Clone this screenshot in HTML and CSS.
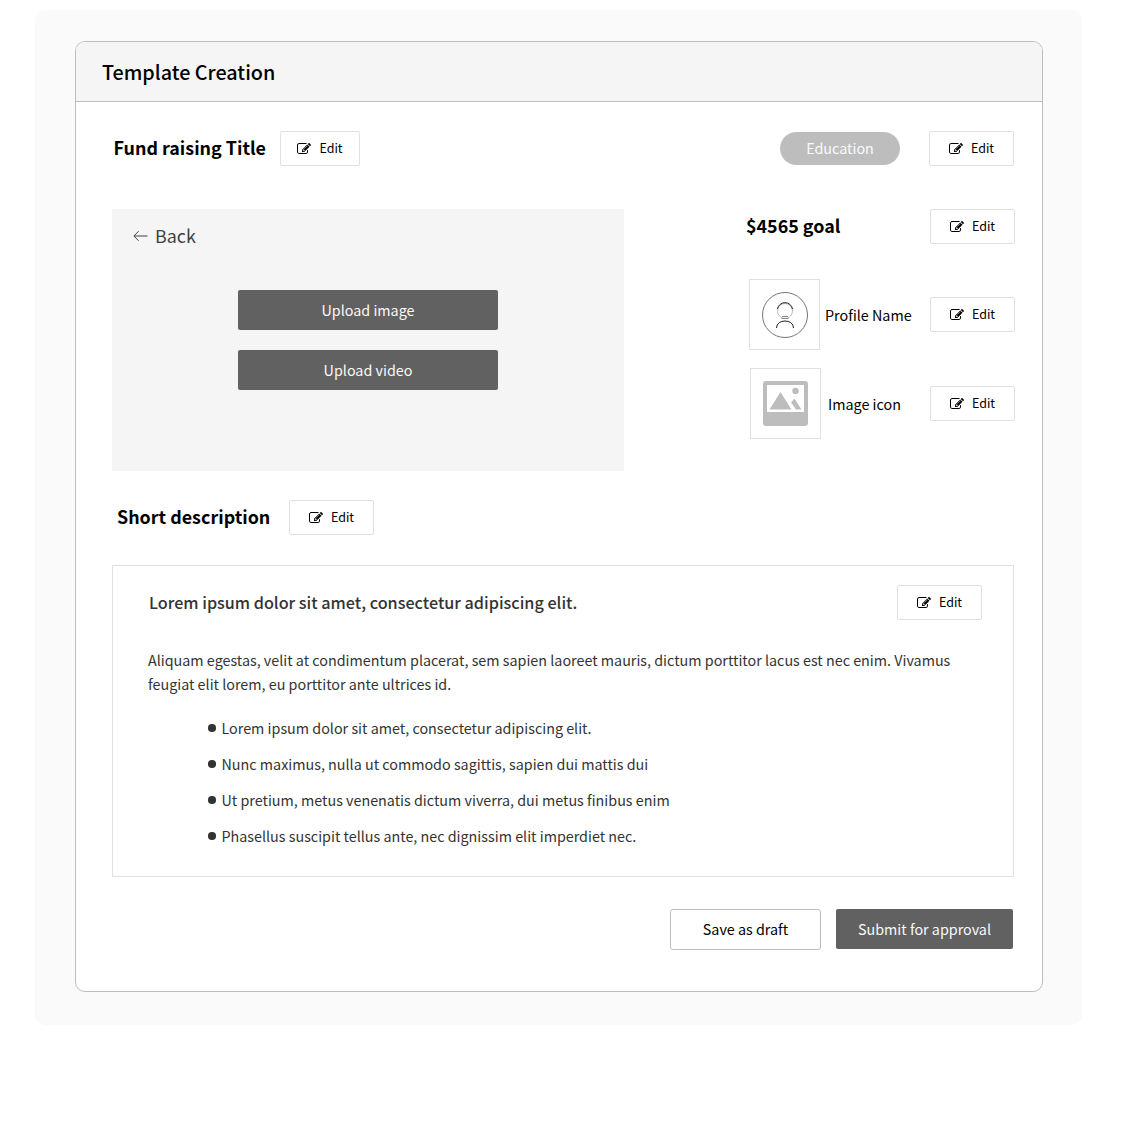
FILE: index.html
```html
<!DOCTYPE html>
<html lang="en">
<head>
  <meta charset="UTF-8" />
  <meta name="viewport" content="width=device-width, initial-scale=1" />
  <title>Template Creation</title>
  <link rel="stylesheet" href="styles.css">
</head>
<body>
  <svg class="sprite" aria-hidden="true">
    <symbol id="icon-edit" viewBox="0 0 1792 1792">
      <path d="M888 1184l116-116-152-152-116 116v56h96v96h56zm440-720q-16-16-33 1l-350 350q-17 17-1 33t33-1l350-350q17-17 1-33zm80 594v190q0 119-84.5 203.5t-203.5 84.5h-832q-119 0-203.5-84.5t-84.5-203.5v-832q0-119 84.5-203.5t203.5-84.5h832q63 0 117 25 15 7 18 23 3 17-9 29l-49 49q-14 14-32 8-23-6-45-6h-832q-66 0-113 47t-47 113v832q0 66 47 113t113 47h832q66 0 113-47t47-113v-126q0-13 9-22l64-64q15-15 35-7t20 29zm-96-738l288 288-672 672h-288v-288zm444 132l-92 92-288-288 92-92q28-28 68-28t68 28l152 152q28 28 28 68t-28 68z"/>
    </symbol>
  </svg>

  <main class="page">
    <div class="card">
      <header class="card-header">
        <h1>Template Creation</h1>
      </header>

      <div class="card-body">
        <div class="title-row">
          <h2 class="fund-title">Fund raising Title</h2>
          <button class="btn-edit small"><svg><use href="#icon-edit"/></svg><span>Edit</span></button>
          <span class="tag">Education</span>
          <button class="btn-edit"><svg><use href="#icon-edit"/></svg><span>Edit</span></button>
        </div>

        <div class="media-row">
          <div class="upload">
            <a class="back">
              <svg width="15" height="12" viewBox="0 0 15 12"><path d="M14.5 6H1M5.6 1.2L0.9 6L5.6 10.8"/></svg>
              <span>Back</span>
            </a>
            <button class="btn-dark">Upload image</button>
            <button class="btn-dark">Upload video</button>
          </div>

          <div class="side">
            <div class="side-row goal">
              <h2>$4565 goal</h2>
              <button class="btn-edit"><svg><use href="#icon-edit"/></svg><span>Edit</span></button>
            </div>
            <div class="side-row profile">
              <div class="thumb">
                <svg class="icon-user" width="46" height="46" viewBox="0 0 46 46">
                  <circle class="ring" cx="23" cy="23" r="22.5"/>
                  <circle class="head-light" cx="23" cy="19" r="7.5"/>
                  <path d="M15.5 17a7.6 7.6 0 0 1 15 0"/>
                  <path class="thin" d="M20 24.5h6M19.5 26.5h7"/>
                  <path d="M14.5 36q0-3.4 2.8-5.4q2.4-1.6 5.7-1.6q3.3 0 5.7 1.6q2.8 2 2.8 5.4"/>
                </svg>
              </div>
              <span class="label">Profile Name</span>
              <button class="btn-edit"><svg><use href="#icon-edit"/></svg><span>Edit</span></button>
            </div>
            <div class="side-row image">
              <div class="thumb">
                <svg class="icon-image" width="45" height="45" viewBox="0 0 45 45">
                  <path fill-rule="evenodd" d="M3 0H42a3 3 0 0 1 3 3V42a3 3 0 0 1-3 3H3a3 3 0 0 1-3-3V3a3 3 0 0 1 3-3zM4 4V31H41V4z"/>
                  <path d="M17.5 11L28.5 28.5H6.5zM28 21.5L31.5 17.5L38.5 28.5H33z"/>
                  <circle cx="32.5" cy="10" r="3.2"/>
                </svg>
              </div>
              <span class="label">Image icon</span>
              <button class="btn-edit"><svg><use href="#icon-edit"/></svg><span>Edit</span></button>
            </div>
          </div>
        </div>

        <div class="desc-row">
          <h2>Short description</h2>
          <button class="btn-edit"><svg><use href="#icon-edit"/></svg><span>Edit</span></button>
        </div>

        <section class="desc">
          <div class="desc-head">
            <h3>Lorem ipsum dolor sit amet, consectetur adipiscing elit.</h3>
            <button class="btn-edit"><svg><use href="#icon-edit"/></svg><span>Edit</span></button>
          </div>
          <p>Aliquam egestas, velit at condimentum placerat, sem sapien laoreet mauris, dictum porttitor lacus est nec enim. Vivamus<br>feugiat elit lorem, eu porttitor ante ultrices id.</p>
          <ul>
            <li><span>Lorem ipsum dolor sit amet, consectetur adipiscing elit.</span></li>
            <li><span>Nunc maximus, nulla ut commodo sagittis, sapien dui mattis dui</span></li>
            <li><span>Ut pretium, metus venenatis dictum viverra, dui metus finibus enim</span></li>
            <li><span>Phasellus suscipit tellus ante, nec dignissim elit imperdiet nec.</span></li>
          </ul>
        </section>

        <div class="actions">
          <button class="btn-light">Save as draft</button>
          <button class="btn-dark">Submit for approval</button>
        </div>
      </div>
    </div>
  </main>
</body>
</html>
```
FILE: styles.css
```css
* {
  box-sizing: border-box;
}

body {
  margin: 0;
  padding: 10px 0 0 35px;
  background: #fff;
  color: #000;
  font-family: "Noto Sans CJK SC", "Noto Sans", sans-serif;
  font-size: 14.33px;
}

h1, h2, h3, p, ul {
  margin: 0;
  padding: 0;
}

h1, h2, h3, .label, .tag {
  white-space: nowrap;
}

button {
  font-family: inherit;
  font-size: 14.33px;
  padding: 0 0 2px;
  color: #000;
}

.sprite {
  display: none;
}

.page {
  width: 1047px;
  height: 1015px;
  padding: 31px 40px;
  background: #fafafa;
  border-radius: 10px;
}

.card {
  width: 968px;
  height: 951px;
  background: #fff;
  border: 1px solid #bdbdbd;
  border-radius: 10px;
  overflow: hidden;
}

.card-header {
  display: flex;
  align-items: center;
  height: 60px;
  padding-left: 26px;
  background: #f5f5f5;
  border-bottom: 1px solid #bdbdbd;
}

h1 {
  font-size: 19.75px;
  font-weight: 500;
}

h2 {
  padding-bottom: 4px;
  font-size: 17.9px;
  font-weight: 700;
}

.card-body {
  padding: 29px 28px 0 36px;
}

.btn-edit {
  display: flex;
  flex-shrink: 0;
  align-items: center;
  justify-content: center;
  gap: 8px;
  width: 85px;
  height: 35px;
  padding: 0;
  background: #fff;
  border: 1px solid #e0e0e0;
  border-radius: 2px;
  font-size: 12.5px;
}

.btn-edit svg {
  width: 14px;
  height: 14px;
}

.btn-edit span {
  padding-bottom: 2px;
}

.btn-edit.small {
  width: 80px;
}

.title-row {
  display: flex;
  align-items: center;
  height: 35px;
}

.fund-title {
  width: 168px;
  padding-left: 1.5px;
}

.tag {
  display: flex;
  align-items: center;
  justify-content: center;
  width: 120px;
  height: 33px;
  margin-left: auto;
  margin-right: 29px;
  padding-bottom: 2px;
  background: #bdbdbd;
  border-radius: 17px;
  color: #fafafa;
}

.media-row {
  display: flex;
  justify-content: space-between;
  margin-top: 43px;
  margin-right: -1px;
}

.upload {
  display: flex;
  flex-direction: column;
  align-items: center;
  gap: 20px;
  width: 512px;
  height: 262px;
  background: #f5f5f5;
}

.back {
  display: flex;
  align-items: center;
  align-self: flex-start;
  gap: 7px;
  height: 30px;
  margin: 12px 0 19px 21px;
  color: #424242;
  font-size: 17.9px;
}

.back span {
  padding-bottom: 2px;
}

.back svg {
  fill: none;
  stroke: #424242;
}

.btn-dark {
  height: 40px;
  background: #616161;
  border: none;
  border-radius: 2px;
  color: #fafafa;
}

.upload .btn-dark {
  width: 260px;
}

.side {
  width: 269px;
}

.side-row {
  display: flex;
  align-items: center;
}

.side-row .btn-edit {
  margin-left: auto;
}

.goal {
  height: 35px;
  margin-bottom: 35px;
}

.profile {
  margin-bottom: 18px;
  padding-left: 3px;
}

.image {
  padding-left: 4px;
}

.thumb {
  display: flex;
  align-items: center;
  justify-content: center;
  width: 71px;
  height: 71px;
  margin-right: 5px;
  border: 1px solid #e0e0e0;
}

.image .thumb {
  margin-right: 7px;
}

.icon-user {
  fill: none;
  stroke: #222;
}

.icon-user .ring {
  stroke: #757575;
}

.icon-user .head-light {
  stroke: #bbb;
}

.icon-user .thin {
  stroke: #888;
}

.icon-image {
  fill: #bdbdbd;
}

.desc-row {
  display: flex;
  align-items: center;
  height: 35px;
  margin-top: 29px;
}

.desc-row h2 {
  width: 177px;
  padding-left: 5px;
}

.desc {
  height: 312px;
  margin-top: 30px;
  padding: 19px 31px 0 35px;
  border: 1px solid #e0e0e0;
  color: #333;
}

.desc-head {
  display: flex;
  align-items: center;
  justify-content: space-between;
}

h3 {
  padding: 0 0 2px 1px;
  font-size: 16.18px;
  font-weight: 500;
}

.desc p {
  margin-top: 28px;
  line-height: 24px;
  white-space: nowrap;
}

.desc ul {
  margin-top: 14px;
  padding-left: 60px;
  list-style: none;
}

.desc li {
  display: flex;
  align-items: center;
  gap: 6px;
  height: 36px;
  white-space: nowrap;
}

.desc li span {
  padding-bottom: 2px;
}

.desc li::before {
  content: "";
  width: 7.5px;
  height: 7.5px;
  border-radius: 50%;
  background: #333;
}

.actions {
  display: flex;
  justify-content: flex-end;
  gap: 15px;
  margin-top: 32px;
  padding-right: 1px;
}

.btn-light {
  width: 151px;
  height: 41px;
  background: #fff;
  border: 1px solid #bdbdbd;
  border-radius: 3px;
}

.actions .btn-dark {
  width: 177px;
}
```
